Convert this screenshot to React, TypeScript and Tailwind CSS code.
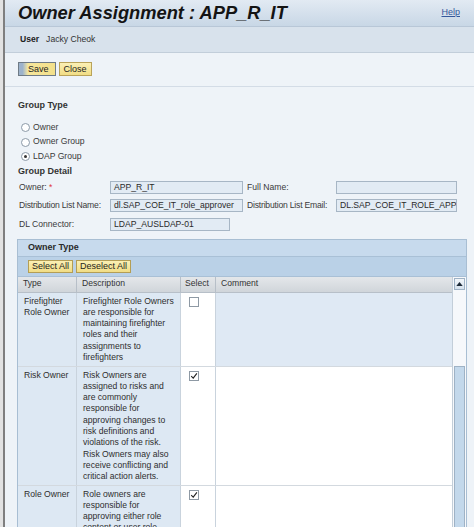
import React from 'react'

type OwnerRow = {
  type: string[]
  desc: string[]
  checked: boolean
  height: string
  commentBg: string
}

const rows: OwnerRow[] = [
  {
    type: ['Firefighter', 'Role Owner'],
    desc: [
      'Firefighter Role Owners',
      'are responsible for',
      'maintaining firefighter',
      'roles and their',
      'assignments to',
      'firefighters',
    ],
    checked: false,
    height: 'h-[74px]',
    commentBg: 'bg-[#dfe9f4]',
  },
  {
    type: ['Risk Owner'],
    desc: [
      'Risk Owners are',
      'assigned to risks and',
      'are commonly',
      'responsible for',
      'approving changes to',
      'risk definitions and',
      'violations of the risk.',
      'Risk Owners may also',
      'receive conflicting and',
      'critical action alerts.',
    ],
    checked: true,
    height: 'h-[119px]',
    commentBg: 'bg-white',
  },
  {
    type: ['Role Owner'],
    desc: [
      'Role owners are',
      'responsible for',
      'approving either role',
      'content or user role',
      'assignments.',
    ],
    checked: true,
    height: 'h-[70px]',
    commentBg: 'bg-white',
  },
]

function YellowButton({ label, focused }: { label: string; focused?: boolean }) {
  return (
    <button
      className={
        focused
          ? 'h-[14px] border border-[#6f7b86] bg-linear-to-r from-[#9db3cc] from-10% via-[#f6e79c] via-25% to-[#f3e08a] pl-[9px] pr-[6px] text-[9px] leading-none text-[#1e1e1e]'
          : 'h-[14px] border border-[#b9a35a] bg-linear-to-b from-[#fbf0b4] to-[#f1dd85] px-[4px] text-[9px] leading-none text-[#1e1e1e]'
      }
    >
      {label}
    </button>
  )
}

function ToolbarButton({ label }: { label: string }) {
  return (
    <button className="h-[13px] border border-[#b49e55] bg-linear-to-b from-[#fbf0b4] to-[#f1dd85] px-[3px] text-[9px] leading-none text-[#1e1e1e]">
      {label}
    </button>
  )
}

function Radio({ label, selected }: { label: string; selected?: boolean }) {
  return (
    <div className="flex h-[14.5px] items-center gap-[3px] pl-[3px]">
      <span className="flex h-[9px] w-[9px] items-center justify-center rounded-full border border-[#8c9aa8] bg-white">
        {selected && <span className="h-[3px] w-[3px] rounded-full bg-[#333]" />}
      </span>
      <span className="text-[#3a3a3a]">{label}</span>
    </div>
  )
}

function Field({ value, width }: { value?: string; width: string }) {
  return (
    <div
      className={`flex h-[13px] items-center overflow-hidden whitespace-nowrap border border-[#a7b6c5] bg-[#e2ebf4] pl-[3px] text-[#2a2a2a] ${width}`}
    >
      {value}
    </div>
  )
}

function CheckBox({ checked }: { checked: boolean }) {
  return (
    <span className="flex h-[10px] w-[10px] items-center justify-center border border-[#8e99a4] bg-white">
      {checked && (
        <svg viewBox="0 0 10 10" className="h-[8px] w-[8px]">
          <path d="M1.5 5.2 L4 7.6 L8.6 1.8" fill="none" stroke="#222" strokeWidth="1.4" />
        </svg>
      )}
    </span>
  )
}

export default function App() {
  return (
    <div className="flex h-[527px] w-[474px] overflow-hidden bg-[#eef3f8] font-['Liberation_Sans',Arial,sans-serif] text-[8.6px] leading-[11.3px] text-[#2b2b2b]">
      <div className="w-[3px] shrink-0 bg-[#e2e2e2]" />
      <div className="w-[2px] shrink-0 bg-[#7f7f7f]" />

      <div className="flex min-w-0 flex-1 flex-col">
        {/* title bar */}
        <div className="flex h-[27px] shrink-0 items-center justify-between border-b border-[#b8c7d7] bg-linear-to-b from-[#e2eaf3] to-[#c8d7e6] pl-[13px] pr-[14px]">
          <h1 className="text-[18.3px] font-bold italic leading-none text-[#141414]">
            Owner Assignment : APP_R_IT
          </h1>
          <a className="text-[9px] text-[#34579b] underline">Help</a>
        </div>

        {/* user bar */}
        <div className="flex h-[26px] shrink-0 items-center border-b border-[#c2ceda] bg-[#d8e2ec] pl-[15px]">
          <span className="font-bold text-[#222]">User</span>
          <span className="ml-[7px] text-[#333]">Jacky Cheok</span>
        </div>

        {/* action buttons */}
        <div className="flex h-[34px] shrink-0 items-start gap-[3px] border-b border-[#d3dce6] pl-[13px] pt-[9px]">
          <YellowButton label="Save" focused />
          <YellowButton label="Close" />
        </div>

        <div className="flex flex-col pl-[13px]">
          {/* group type */}
          <div className="mt-[13px] text-[9px] font-bold text-[#333]">Group Type</div>
          <div className="mt-[9px]">
            <Radio label="Owner" />
            <Radio label="Owner Group" />
            <Radio label="LDAP Group" selected />
          </div>

          {/* group detail */}
          <div className="mt-[2px] text-[9px] font-bold text-[#333]">Group Detail</div>
          <div className="mt-[1px] flex flex-col pl-[1px] text-[#3a3a3a]">
            <div className="flex h-[18.5px] items-center">
              <span className="w-[91px]">
                Owner: <span className="text-[#e0353a]">*</span>
              </span>
              <Field value="APP_R_IT" width="w-[133px]" />
              <span className="ml-[4px] w-[89px]">Full Name:</span>
              <Field width="w-[121px]" />
            </div>
            <div className="flex h-[18.5px] items-center">
              <span className="w-[91px] whitespace-nowrap tracking-[-0.2px]">Distribution List Name:</span>
              <Field value="dl.SAP_COE_IT_role_approver" width="w-[133px]" />
              <span className="ml-[4px] w-[89px] whitespace-nowrap tracking-[-0.2px]">Distribution List Email:</span>
              <Field value="DL.SAP_COE_IT_ROLE_APPROVER" width="w-[121px]" />
            </div>
            <div className="flex h-[18.5px] items-center">
              <span className="w-[91px]">DL Connector:</span>
              <Field value="LDAP_AUSLDAP-01" width="w-[120px]" />
            </div>
          </div>

          {/* owner type panel */}
          <div className="-ml-px mt-[5px] w-[450px] border border-[#a8bed3]">
            <div className="flex h-[17px] items-center border-b border-[#a9c0d6] bg-[#c7daed] pl-[10px] text-[9px] font-bold text-[#2a2a2a]">
              Owner Type
            </div>
            <div className="flex h-[20px] items-center gap-[3px] border-b border-[#a9c0d6] bg-[#bad1e7] pl-[10px]">
              <ToolbarButton label="Select All" />
              <ToolbarButton label="Deselect All" />
            </div>

            <div className="flex">
              <div className="w-[434px]">
                <div className="grid h-[16px] grid-cols-[59px_104px_35px_236px] border-b border-[#b7bfc8] bg-linear-to-b from-[#e4e7ea] to-[#d0d5da] text-[#333]">
                  <div className="flex items-center border-r border-[#b7bfc8] pl-[5px]">Type</div>
                  <div className="flex items-center border-r border-[#b7bfc8] pl-[5px]">Description</div>
                  <div className="flex items-center border-r border-[#b7bfc8] pl-[4px]">Select</div>
                  <div className="flex items-center pl-[5px]">Comment</div>
                </div>

                {rows.map((row) => (
                  <div
                    key={row.type.join(' ')}
                    className={`grid grid-cols-[59px_104px_35px_236px] border-b border-[#d3d9df] ${row.height}`}
                  >
                    <div className="border-r border-[#c9d3dd] bg-[#dde8f3] pl-[6px] pt-[3px] text-[#2e2e2e]">
                      {row.type.map((t) => (
                        <div key={t} className="whitespace-nowrap">
                          {t}
                        </div>
                      ))}
                    </div>
                    <div className="border-r border-[#c9d3dd] bg-[#dde8f3] pl-[6px] pt-[3px] text-[#2e2e2e]">
                      {row.desc.map((d) => (
                        <div key={d} className="whitespace-nowrap">
                          {d}
                        </div>
                      ))}
                    </div>
                    <div className="border-r border-[#c9d3dd] bg-white pl-[8px] pt-[4px]">
                      <CheckBox checked={row.checked} />
                    </div>
                    <div className={row.commentBg} />
                  </div>
                ))}
              </div>

              {/* scrollbar */}
              <div className="flex w-[14px] flex-col border-l border-[#c3ced9] bg-[#f6f8fb]">
                <div className="mx-[1px] mt-[1px] flex h-[12px] items-center justify-center border border-[#9fb2c5] bg-linear-to-b from-[#f2f6fa] to-[#d6e2ee]">
                  <svg viewBox="0 0 8 5" className="h-[4px] w-[7px]">
                    <path d="M0 5 L4 0 L8 5 Z" fill="#1d2a38" />
                  </svg>
                </div>
                <div className="h-[76px]" />
                <div className="mx-[1px] h-[200px] border border-[#9fb2c5] bg-[#c3d8eb]" />
              </div>
            </div>
          </div>
        </div>
      </div>
    </div>
  )
}
